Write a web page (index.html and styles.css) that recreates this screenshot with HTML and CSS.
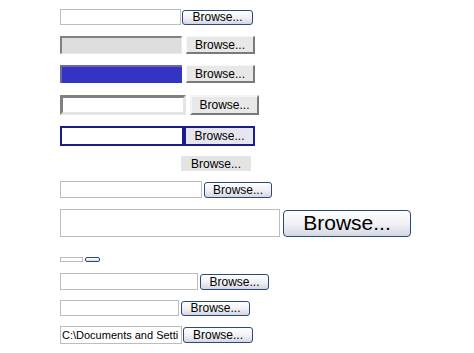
FILE: index.html
```html
<!DOCTYPE html>
<html lang="en">
<head>
    <meta charset="UTF-8">
    <title>File inputs</title>
    <link rel="stylesheet" href="styles.css">
</head>
<body>
<div class="page">
    <div class="row r1">
        <div class="field xp-field"></div>
        <div class="btn xp-btn">Browse...</div>
    </div>
    <div class="row r2">
        <div class="field grey-field"></div>
        <div class="btn grey-btn">Browse...</div>
    </div>
    <div class="row r3">
        <div class="field blue-field"></div>
        <div class="btn grey-btn">Browse...</div>
    </div>
    <div class="row r4">
        <div class="field inset-field"></div>
        <div class="btn outset-btn">Browse...</div>
    </div>
    <div class="row r5">
        <div class="field navy-field"></div>
        <div class="btn navy-btn">Browse...</div>
    </div>
    <div class="row r6">
        <div class="btn flat-btn">Browse...</div>
    </div>
    <div class="row r7">
        <div class="field xp-field"></div>
        <div class="btn xp-btn">Browse...</div>
    </div>
    <div class="row r8">
        <div class="field xp-field"></div>
        <div class="btn xp-btn">Browse...</div>
    </div>
    <div class="row r9">
        <div class="field xp-field"></div>
        <div class="btn xp-btn"></div>
    </div>
    <div class="row r10">
        <div class="field xp-field"></div>
        <div class="btn xp-btn">Browse...</div>
    </div>
    <div class="row r11">
        <div class="field xp-field"></div>
        <div class="btn xp-btn">Browse...</div>
    </div>
    <div class="row r12">
        <div class="field xp-field path">C:\Documents and Setti</div>
        <div class="btn xp-btn">Browse...</div>
    </div>
</div>
</body>
</html>
```

FILE: styles.css
```css
body {
    margin: 0;
    font-family: "Liberation Sans", Arial, sans-serif;
    font-size: 12px;
    background-color: #fff;
    color: #000;
}
.page {
    padding: 9px 0 0 60px;
}
.row {
    display: flex;
    align-items: center;
    margin-bottom: 11px;
}
.field {
    box-sizing: border-box;
    height: 100%;
    overflow: hidden;
    white-space: nowrap;
}
.btn {
    box-sizing: border-box;
    display: flex;
    align-items: center;
    justify-content: center;
    white-space: nowrap;
}
.xp-field {
    border: 1px solid #bdbdbd;
    background-color: #fff;
}
.xp-btn {
    border: 1px solid #2a4a7c;
    border-radius: 3px;
    background: linear-gradient(#ffffff, #f2f2f6 50%, #d4d6e2);
}
.grey-field {
    background-color: #dedede;
    border-top: 2px solid #808080;
    border-left: 2px solid #808080;
    border-bottom: 1px solid #e8e8e8;
    border-right: 1px solid #e8e8e8;
}
.grey-btn {
    background-color: #e8e8e8;
    border-top: 1px solid #f8f8f8;
    border-left: 1px solid #f8f8f8;
    border-right: 2px solid #7a7a7a;
    border-bottom: 2px solid #7a7a7a;
}
.blue-field {
    background-color: #3434c4;
    border-top: 2px solid #6a6a9a;
    border-left: 2px solid #6a6a9a;
}
.inset-field {
    background-color: #fff;
    border: 3px solid;
    border-color: #808080 #e4e4e4 #e4e4e4 #808080;
}
.outset-btn {
    background-color: #e8e8e8;
    border: 2px solid;
    border-color: #f4f4f4 #7a7a7a #7a7a7a #f4f4f4;
}
.navy-field {
    background-color: #fff;
    border: 2px solid #1c1c8a;
}
.navy-btn {
    background-color: #e6e6f0;
    border: 2px solid #1c1c8a;
}
.flat-btn {
    background-color: #e4e4e4;
}
.path {
    font-size: 11px;
    line-height: 16px;
    padding-left: 1px;
}

.r1 { height: 16px; }
.r1 .field { width: 121px; }
.r1 .btn { width: 71px; height: 15px; margin-left: 1px; }

.r2 { height: 18px; }
.r2 .field { width: 122px; }
.r2 .btn { width: 69px; height: 18px; margin-left: 4px; }

.r3 { height: 18px; margin-bottom: 12px; }
.r3 .field { width: 122px; }
.r3 .btn { width: 69px; height: 18px; margin-left: 4px; }

.r4 { height: 20px; }
.r4 .field { width: 126px; }
.r4 .btn { width: 69px; height: 20px; margin-left: 4px; }

.r5 { height: 20px; margin-bottom: 10px; }
.r5 .field { width: 124px; }
.r5 .btn { width: 71px; height: 20px; margin-left: 0; }

.r6 { height: 15px; margin-bottom: 10px; }
.r6 .btn { width: 70px; height: 15px; margin-left: 121px; }

.r7 { height: 17px; }
.r7 .field { width: 142px; }
.r7 .btn { width: 68px; height: 16px; margin-left: 2px; }

.r8 { height: 28px; margin-bottom: 20px; font-size: 21px; }
.r8 .field { width: 220px; }
.r8 .btn { width: 128px; height: 27px; margin-left: 3px; border-radius: 4px; }

.r9 { height: 5px; }
.r9 .field { width: 23px; }
.r9 .btn { width: 15px; height: 5px; margin-left: 2px; border-radius: 2px; }

.r10 { height: 17px; margin-bottom: 10px; }
.r10 .field { width: 138px; }
.r10 .btn { width: 69px; height: 16px; margin-left: 2px; }

.r11 { height: 16px; margin-bottom: 10px; }
.r11 .field { width: 119px; }
.r11 .btn { width: 69px; height: 15px; margin-left: 2px; }

.r12 { height: 18px; }
.r12 .field { width: 122px; }
.r12 .btn { width: 70px; height: 16px; margin-left: 1px; }
```
